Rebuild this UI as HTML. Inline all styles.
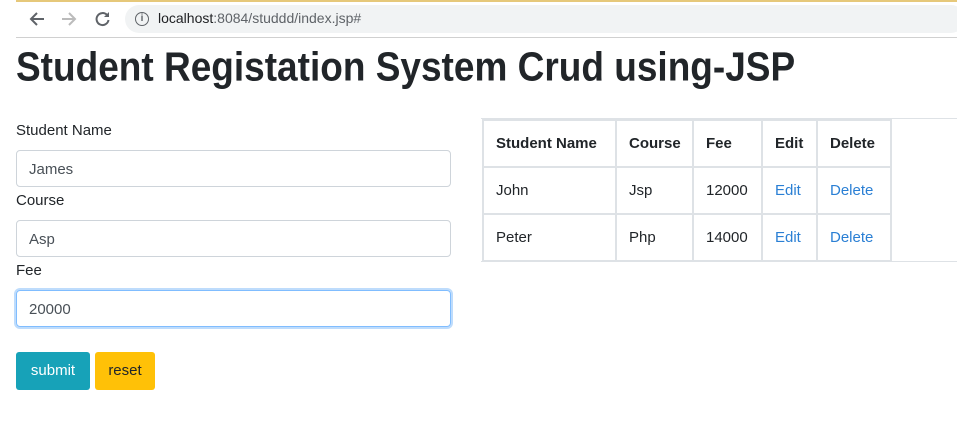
<!DOCTYPE html><html><head><style>
body{margin:0;width:957px;height:446px;background:#fff;font-family:"Liberation Sans",sans-serif;color:#212529;position:relative;overflow:hidden}
.a{position:absolute}
.lbl{position:absolute;left:16px;font-size:15px}
.inp{position:absolute;left:16px;width:435px;height:37px;border:1px solid #ced4da;border-radius:4px;box-sizing:border-box;padding-left:12px;line-height:37px;font-size:15px;color:#495057}
table{position:absolute;left:482px;top:119px;border-collapse:collapse;font-size:15px;table-layout:fixed;width:408px}
td,th{border:2px solid #dee2e6;padding:0 12px;height:45px;text-align:left;white-space:nowrap}
th{font-weight:bold}
a{color:#2a7fd4;text-decoration:none}
</style></head><body>
<div class="a" style="left:16px;top:0;width:941px;height:2px;background:#e6c87a"></div>
<svg class="a" style="left:28px;top:10px" width="90" height="18" viewBox="0 0 90 18"><path d="M16 9H4M9 3L3 9l6 6" stroke="#5f6368" stroke-width="2" fill="none"/><path d="M34 9h12M41 3l6 6-6 6" stroke="#bbb" stroke-width="2" fill="none"/><path d="M79 5a6 6 0 1 0 1.5 5" stroke="#5f6368" stroke-width="2" fill="none"/><path d="M81 2v5h-5z" fill="#5f6368"/></svg>
<div class="a" style="left:125px;top:5px;width:840px;height:28px;border-radius:14px;background:#f1f3f4"></div>
<div class="a" style="left:135px;top:12px;width:12px;height:12px;border:1.5px solid #5f6368;border-radius:50%;font-size:10px;text-align:center;line-height:12px;color:#5f6368;font-weight:bold">i</div>
<div class="a" style="left:158px;top:10px;font-size:14px;color:#202124">localhost<span style="color:#5f6368">:8084/studdd/index.jsp#</span></div>
<div class="a" style="left:16px;top:37px;width:941px;height:1px;background:#d0d0d0"></div>
<div class="a" style="left:16px;top:44px;font-size:37px;font-weight:bold;white-space:nowrap;transform:scaleY(1.1);transform-origin:top left">Student Registation System Crud using-JSP</div>
<div class="lbl" style="top:122px">Student Name</div>
<div class="inp" style="top:150px">James</div>
<div class="lbl" style="top:192px">Course</div>
<div class="inp" style="top:220px">Asp</div>
<div class="lbl" style="top:262px">Fee</div>
<div class="inp" style="top:290px;border-color:#80bdff;box-shadow:0 0 0 2px #bedcfc">20000</div>
<div class="a" style="left:16px;top:352px;width:74px;height:38px;background:#17a2b8;color:#fff;border-radius:3px;text-align:center;line-height:38px;font-size:15px">submit</div>
<div class="a" style="left:95px;top:352px;width:60px;height:38px;background:#ffc107;color:#212529;border-radius:3px;text-align:center;line-height:38px;font-size:15px">reset</div>
<div class="a" style="left:481px;top:118px;width:476px;height:142px;border-top:1px solid #dee2e6;border-bottom:1px solid #dee2e6"></div>
<table><colgroup><col style="width:133px"><col style="width:77px"><col style="width:69px"><col style="width:55px"><col style="width:74px"></colgroup>
<tr><th>Student Name</th><th>Course</th><th>Fee</th><th>Edit</th><th>Delete</th></tr>
<tr><td>John</td><td>Jsp</td><td>12000</td><td><a>Edit</a></td><td><a>Delete</a></td></tr>
<tr><td>Peter</td><td>Php</td><td>14000</td><td><a>Edit</a></td><td><a>Delete</a></td></tr></table>
</body></html>
